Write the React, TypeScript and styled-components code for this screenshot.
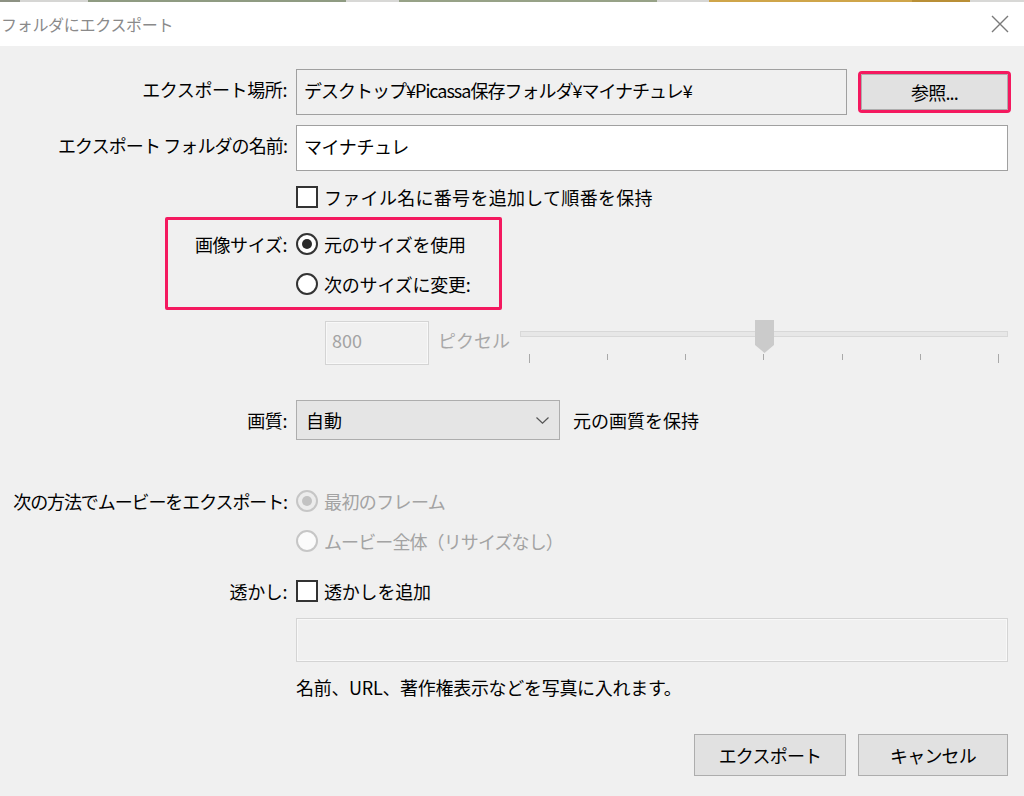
import React from "react";
import styled, { createGlobalStyle } from "styled-components";

const FONT = `"Noto Sans CJK JP", "Noto Sans", sans-serif`;
const PINK = "#f4195f";

const GlobalStyle = createGlobalStyle`
  html, body { margin: 0; padding: 0; background: #f0f0f0; }
  body { font-family: ${FONT}; color: #000000; font-weight: 400; }
  * { box-sizing: border-box; }
`;

const Window = styled.div`
  width: 1024px;
  height: 796px;
  overflow: hidden;
  display: flex;
  flex-direction: column;
  background: #f0f0f0;
`;

const Strip = styled.svg`
  display: block;
  flex: none;
`;

const TitleBar = styled.div`
  height: 44px;
  flex: none;
  background: #ffffff;
  display: flex;
  align-items: center;
  justify-content: space-between;
  padding: 0 15px 0 1px;
`;

const Title = styled.span`
  font-size: 16px;
  line-height: 20px;
  color: #8a8a8a;
  letter-spacing: -0.3px;
`;

const CloseIcon = styled.svg`
  display: block;
`;

const Body = styled.div`
  display: flex;
  flex-direction: column;
  padding: 23px 16px 0 0;
`;

const Row = styled.div<{ $mt?: number; $center?: boolean }>`
  display: grid;
  grid-template-columns: 287px 1fr;
  column-gap: 9px;
  margin-top: ${(p) => p.$mt ?? 0}px;
  align-items: ${(p) => (p.$center ? "center" : "start")};
`;

const Label = styled.div<{ $pt?: number; $lh?: number; $ls?: number }>`
  text-align: right;
  font-size: 18px;
  line-height: ${(p) => p.$lh ?? 24}px;
  padding-top: ${(p) => p.$pt ?? 0}px;
  white-space: nowrap;
  letter-spacing: ${(p) => p.$ls ?? -0.4}px;
`;

const Controls = styled.div<{ $gap?: number }>`
  display: flex;
  align-items: center;
  gap: ${(p) => p.$gap ?? 0}px;
  min-width: 0;
`;

const Field = styled.div<{ $bg: string; $h: number; $ls?: number }>`
  flex: 1;
  height: ${(p) => p.$h}px;
  border: 1px solid #a0a0a0;
  background: ${(p) => p.$bg};
  padding: 8px 7px;
  font-size: 18px;
  line-height: 24px;
  white-space: nowrap;
  overflow: hidden;
  letter-spacing: ${(p) => p.$ls ?? -0.4}px;
`;

const DisabledField = styled.div<{ $h: number; $w?: number; $ml?: number }>`
  ${(p) => (p.$w ? `width: ${p.$w}px; flex: none;` : "flex: 1;")}
  margin-left: ${(p) => p.$ml ?? 0}px;
  height: ${(p) => p.$h}px;
  border: 1px solid #d4d4d4;
  box-shadow: inset 0 0 0 1px #f8f8f8;
  background: #f0f0f0;
  padding: 6px 6px;
  font-size: 18px;
  line-height: 24px;
  color: #a3a3a3;
`;

const Button = styled.button<{ $w: number; $h: number; $highlight?: boolean }>`
  flex: none;
  width: ${(p) => p.$w}px;
  height: ${(p) => p.$h}px;
  border: 1px solid #adadad;
  background: #e1e1e1;
  font-family: ${FONT};
  font-size: 18px;
  line-height: 24px;
  color: #000000;
  padding: 0;
  letter-spacing: -0.8px;
  ${(p) => (p.$highlight ? `outline: 3px solid ${PINK}; outline-offset: 0px; border-radius: 1px;` : "")}
`;

const Option = styled.div<{ $h?: number }>`
  display: flex;
  align-items: center;
  gap: 6px;
  height: ${(p) => p.$h ?? 28}px;
`;

const OptionText = styled.span<{ $disabled?: boolean; $ls?: number }>`
  font-size: 18px;
  line-height: 24px;
  white-space: nowrap;
  color: ${(p) => (p.$disabled ? "#a3a3a3" : "#000000")};
  letter-spacing: ${(p) => p.$ls ?? -0.2}px;
`;

const CheckBox = styled.span`
  flex: none;
  width: 22px;
  height: 22px;
  border: 2px solid #333333;
  background: #ffffff;
`;

const Radio = styled.span<{ $checked?: boolean; $disabled?: boolean; $bg?: string }>`
  flex: none;
  width: 22px;
  height: 22px;
  border-radius: 50%;
  border: 2px solid ${(p) => (p.$disabled ? "#c6c6c6" : "#333333")};
  background: ${(p) => p.$bg ?? "#ffffff"};
  display: flex;
  align-items: center;
  justify-content: center;
  &::after {
    content: "";
    display: ${(p) => (p.$checked ? "block" : "none")};
    width: 10px;
    height: 10px;
    border-radius: 50%;
    background: ${(p) => (p.$disabled ? "#c2c2c2" : "#2b2b2b")};
  }
`;

const Section = styled.div<{ $mt?: number }>`
  position: relative;
  display: flex;
  flex-direction: column;
  gap: 12px;
  margin-top: ${(p) => p.$mt ?? 0}px;
`;

const Highlight = styled.div`
  position: absolute;
  left: 165px;
  top: -13px;
  width: 337px;
  height: 93px;
  border: 3px solid ${PINK};
  border-radius: 2px;
  pointer-events: none;
`;

const Unit = styled.span`
  flex: none;
  margin-left: 9px;
  font-size: 18px;
  line-height: 24px;
  color: #a8a8a8;
  padding-bottom: 6px;
`;

const Slider = styled.div`
  position: relative;
  flex: 1;
  margin-left: 10px;
  height: 44px;
  align-self: flex-start;
  margin-top: -1px;
`;

const Track = styled.div`
  margin-top: 11px;
  height: 6px;
  border: 1px solid #d8d8d8;
  background: #e7e7e7;
`;

const Thumb = styled.svg`
  position: absolute;
  top: 0;
  display: block;
`;

const Ticks = styled.div`
  margin-top: 17px;
  display: flex;
  justify-content: space-between;
  align-items: flex-start;
  padding: 0 9px;
`;

const Tick = styled.span<{ $long?: boolean }>`
  width: 1px;
  height: ${(p) => (p.$long ? 9 : 6)}px;
  background: #a9a9a9;
`;

const Select = styled.div`
  flex: none;
  width: 264px;
  height: 40px;
  border: 1px solid #adadad;
  background: #e5e5e5;
  display: flex;
  align-items: center;
  justify-content: space-between;
  padding: 0 10px 0 9px;
  font-size: 18px;
  line-height: 24px;
`;

const Note = styled.span`
  margin-left: 13px;
  font-size: 18px;
  line-height: 24px;
  white-space: nowrap;
`;

const Hint = styled.div`
  margin: 13px 0 0 296px;
  font-size: 18px;
  line-height: 24px;
  letter-spacing: -0.3px;
`;

const Footer = styled.div`
  margin-top: 35px;
  display: flex;
  justify-content: flex-end;
  gap: 12px;
`;

const stripSegments: [number, number, string][] = [
  [0, 20, "#8d9283"],
  [20, 88, "#d6d6d4"],
  [88, 346, "#8f9b82"],
  [346, 399, "#d8d8d6"],
  [399, 657, "#97a287"],
  [657, 709, "#d6d6d4"],
  [709, 912, "#cfa54a"],
  [912, 970, "#b98f36"],
  [970, 1024, "#d8d8d6"],
];

const ticks = [true, false, false, false, false, false, true];

export default function App() {
  return (
    <>
      <GlobalStyle />
      <Window>
        <Strip width="1024" height="2" viewBox="0 0 1024 2">
          {stripSegments.map(([a, b, c]) => (
            <rect key={a} x={a} y={0} width={b - a} height={2} fill={c} />
          ))}
        </Strip>
        <TitleBar>
          <Title>フォルダにエクスポート</Title>
          <CloseIcon width="18" height="18" viewBox="0 0 18 18">
            <path d="M1 1 L17 17 M17 1 L1 17" stroke="#7a7a7a" strokeWidth="1.4" fill="none" />
          </CloseIcon>
        </TitleBar>
        <Body>
          <Row>
            <Label $pt={8}>エクスポート場所:</Label>
            <Controls $gap={14}>
              <Field $bg="#f0f0f0" $h={46} $ls={-1}>
                デスクトップ¥Picassa保存フォルダ¥マイナチュレ¥
              </Field>
              <Button $w={147} $h={36} $highlight>
                参照...
              </Button>
            </Controls>
          </Row>

          <Row $mt={10}>
            <Label $pt={8} $ls={-0.9}>エクスポート フォルダの名前:</Label>
            <Controls>
              <Field $bg="#ffffff" $h={46}>
                マイナチュレ
              </Field>
            </Controls>
          </Row>

          <Row $mt={14} $center>
            <span />
            <Option $h={24}>
              <CheckBox />
              <OptionText $ls={0.3}>ファイル名に番号を追加して順番を保持</OptionText>
            </Option>
          </Row>

          <Section $mt={21}>
            <Highlight />
            <Row $center>
              <Label $lh={28}>画像サイズ:</Label>
              <Option>
                <Radio $checked />
                <OptionText>元のサイズを使用</OptionText>
              </Option>
            </Row>
            <Row $center>
              <span />
              <Option>
                <Radio />
                <OptionText>次のサイズに変更:</OptionText>
              </Option>
            </Row>
          </Section>

          <Row $mt={23}>
            <span />
            <Controls>
              <DisabledField $w={104} $h={44} $ml={29}>
                800
              </DisabledField>
              <Unit>ピクセル</Unit>
              <Slider>
                <Track />
                <Thumb width="19" height="33" viewBox="0 0 19 33" style={{ left: 235 }}>
                  <path d="M0 0 H19 V25 L9.5 33 L0 25 Z" fill="#cbcbcb" />
                </Thumb>
                <Ticks>
                  {ticks.map((l, i) => (
                    <Tick key={i} $long={l} />
                  ))}
                </Ticks>
              </Slider>
            </Controls>
          </Row>

          <Row $mt={35} $center>
            <Label>画質:</Label>
            <Controls>
              <Select>
                <span>自動</span>
                <svg width="13" height="7" viewBox="0 0 13 7">
                  <path d="M0.5 0.5 L6.5 6.2 L12.5 0.5" stroke="#555" strokeWidth="1.2" fill="none" />
                </svg>
              </Select>
              <Note>元の画質を保持</Note>
            </Controls>
          </Row>

          <Section $mt={47}>
            <Row $center>
              <Label $lh={28} $ls={-1.1}>次の方法でムービーをエクスポート:</Label>
              <Option>
                <Radio $checked $disabled $bg="#ececec" />
                <OptionText $disabled $ls={-0.6}>最初のフレーム</OptionText>
              </Option>
            </Row>
            <Row $center>
              <span />
              <Option>
                <Radio $disabled $bg="#fbfbfb" />
                <OptionText $disabled $ls={-0.9}>ムービー全体（リサイズなし）</OptionText>
              </Option>
            </Row>
          </Section>

          <Row $mt={24} $center>
            <Label>透かし:</Label>
            <Option $h={24}>
              <CheckBox />
              <OptionText>透かしを追加</OptionText>
            </Option>
          </Row>

          <Row $mt={15}>
            <span />
            <Controls>
              <DisabledField $h={44} />
            </Controls>
          </Row>

          <Hint>名前、URL、著作権表示などを写真に入れます。</Hint>

          <Footer>
            <Button $w={152} $h={42}>エクスポート</Button>
            <Button $w={150} $h={42}>キャンセル</Button>
          </Footer>
        </Body>
      </Window>
    </>
  );
}
